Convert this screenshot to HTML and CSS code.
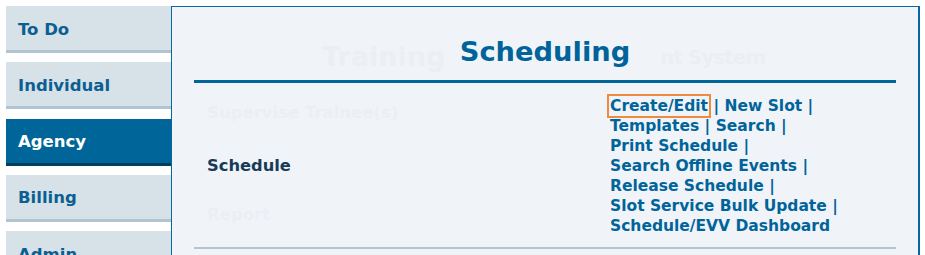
FILE: index.html
```html
<!DOCTYPE html>
<html lang="en">
<head>
    <meta charset="UTF-8">
    <meta name="viewport" content="width=device-width, initial-scale=1.0">
    <title>Scheduling</title>
    <link rel="stylesheet" href="styles.css">
</head>
<body>
    <div class="layout">
        <ul class="tabs">
            <li class="tab"><a href="#">To Do</a></li>
            <li class="tab"><a href="#">Individual</a></li>
            <li class="tab active"><a href="#">Agency</a></li>
            <li class="tab"><a href="#">Billing</a></li>
            <li class="tab"><a href="#">Admin</a></li>
        </ul>

        <div class="panel">
            <!-- previous page fading out -->
            <div class="ghost" aria-hidden="true">
                <div class="ghost-title t1">Training</div>
                <div class="ghost-title t2">nt System</div>
                <div class="ghost-row g1">Supervise Trainee(s)</div>
                <div class="ghost-row g2">Report</div>
            </div>

            <div class="head">
                <h1>Scheduling</h1>
            </div>
            <div class="row">
                <div class="label">Schedule</div>
                <div class="links">
                    <a href="#" class="focus">Create/Edit</a> | <a href="#">New Slot</a> |<br>
                    <a href="#">Templates</a> | <a href="#">Search</a> |<br>
                    <a href="#">Print Schedule</a> |<br>
                    <a href="#">Search Offline Events</a> |<br>
                    <a href="#">Release Schedule</a> |<br>
                    <a href="#">Slot Service Bulk Update</a> |<br>
                    <a href="#">Schedule/EVV Dashboard</a>
                </div>
            </div>
        </div>
    </div>
</body>
</html>
```

FILE: styles.css
```css
*{
    margin: 0;
    padding: 0;
    list-style: none;
    box-sizing: border-box;
}
html,body{
    height: 100%;
    overflow: hidden;
}
body{
    background-color: #fff;
    font-family: "DejaVu Sans", Verdana, sans-serif;
    font-weight: bold;
}
a{
    color: #00649b;
    text-decoration: none;
}
.layout{
    display: flex;
    align-items: flex-start;
    padding: 6px 0 0 6px;
    height: 100%;
}
.tabs{
    width: 165px;
    flex-shrink: 0;
    display: flex;
    flex-direction: column;
    gap: 9.25px;
}
.tab{
    height: 47px;
    flex-shrink: 0;
    background-color: #d6e1e8;
    border-bottom: 3px solid #b0c4d1;
    display: flex;
    align-items: center;
    padding: 2px 0 0 12px;
    font-size: 16.5px;
}
.tab a{
    color: #0b5f92;
}
.tab.active{
    background-color: #006699;
    border-bottom-color: #00405e;
}
.tab.active a{
    color: #fff;
}
.panel{
    position: relative;
    width: 749px;
    height: 100%;
    border: 1px solid #0b66a0;
    border-bottom: none;
    border-right-width: 2px;
    background-color: #f0f4f8;
    padding: 0 22px;
}
.head{
    position: relative;
    padding: 29px 0 12px;
    border-bottom: 3px solid #006699;
    text-align: center;
}
.head h1{
    font-size: 27.3px;
    line-height: 32px;
    color: #00649b;
}
.row{
    position: relative;
    display: flex;
    align-items: center;
    padding: 13px 0 11px;
    border-bottom: 2px solid #b2c6d2;
}
.label{
    width: 416px;
    flex-shrink: 0;
    padding: 0 0 2px 13px;
    font-size: 16.3px;
    color: #173b57;
}
.links{
    font-size: 15.5px;
    line-height: 20px;
    color: #00649b;
}
.links .focus{
    outline: 2px solid #f08a3c;
    outline-offset: 1px;
}
.ghost{
    position: absolute;
    inset: 0;
    color: #ebeff4;
}
.ghost-title{
    position: absolute;
    top: 34px;
    font-size: 27px;
}
.t1{ left: 150px; }
.t2{
    left: 488px;
    letter-spacing: -1px;
    font-size: 20px;
    top: 38px;
}
.ghost-row{
    position: absolute;
    left: 35px;
    font-size: 16.5px;
}
.g1{ top: 96px; }
.g2{ top: 198px; }
```
